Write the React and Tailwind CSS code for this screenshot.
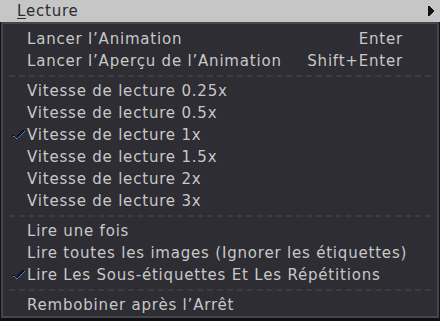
import React from 'react';

const Check = () => (
  <svg width="14" height="12" viewBox="0 0 14 12" shapeRendering="crispEdges">
    <path d="M1 6h3v1h1v1h1V6h1V5h1V4h1V3h1V2h1V1h2v3h-1v1h-1v1h-1v1h-1v1h-1v1H8v1H5v-1H4V9H3V8H2V7H1z" fill="#111116" />
    <path d="M2 7h2v1h1v1h2V8h1V7h1V6h1V5h1V4h1V3h1V2h1v1h-1v1h-1v1h-1v1h-1v1H9v1H8v1H7v1H5V9H4V8H2z" fill="#4a7fe0" />
  </svg>
);

const Row = ({ label, shortcut, checked }) => (
  <div className="flex items-center h-[22px] pl-[8px] pr-[34px]">
    <div className="w-[16px] shrink-0 flex items-center">{checked && <Check />}</div>
    <span className="flex-1 whitespace-nowrap">{label}</span>
    {shortcut && <span className="whitespace-nowrap">{shortcut}</span>}
  </div>
);

const Sep = () => (
  <div className="h-[8px] flex items-center px-[6px]">
    <div className="w-full border-t-2 border-dashed border-[#3c3c44]" />
  </div>
);

export default function App() {
  return (
    <div
      className="w-[440px] h-[321px] overflow-hidden bg-[#1a1a1e] flex flex-col text-[15px] tracking-[0.8px]"
      style={{ fontFamily: '"DejaVu Sans", sans-serif' }}
    >
      <div className="h-[22px] bg-[#c6c6c6] flex items-center pl-[17px] pr-[6px] text-[#2b2b30]">
        <span className="flex-1">
          <span className="underline underline-offset-2">L</span>ecture
        </span>
        <svg width="6" height="10" viewBox="0 0 6 10" shapeRendering="crispEdges">
          <path d="M0 0h2v1h1v1h1v1h1v1h1v2H5v1H4v1H3v1H2v1H0z" fill="#111" />
        </svg>
      </div>
      <div className="h-[1px] bg-[#101012]" />
      <div className="flex-1 border-l-[1px] border-r-[1px] border-b-[3px] border-[#101012]">
        <div className="h-full border-2 border-[#45454d] bg-[#2d2d33] text-[#c8c8c8] pt-[4px]">
          <Row label="Lancer l’Animation" shortcut="Enter" />
          <Row label="Lancer l’Aperçu de l’Animation" shortcut="Shift+Enter" />
          <Sep />
          <Row label="Vitesse de lecture 0.25x" />
          <Row label="Vitesse de lecture 0.5x" />
          <Row label="Vitesse de lecture 1x" checked />
          <Row label="Vitesse de lecture 1.5x" />
          <Row label="Vitesse de lecture 2x" />
          <Row label="Vitesse de lecture 3x" />
          <Sep />
          <Row label="Lire une fois" />
          <Row label="Lire toutes les images (Ignorer les étiquettes)" />
          <Row label="Lire Les Sous-étiquettes Et Les Répétitions" checked />
          <Sep />
          <Row label="Rembobiner après l’Arrêt" />
        </div>
      </div>
    </div>
  );
}
